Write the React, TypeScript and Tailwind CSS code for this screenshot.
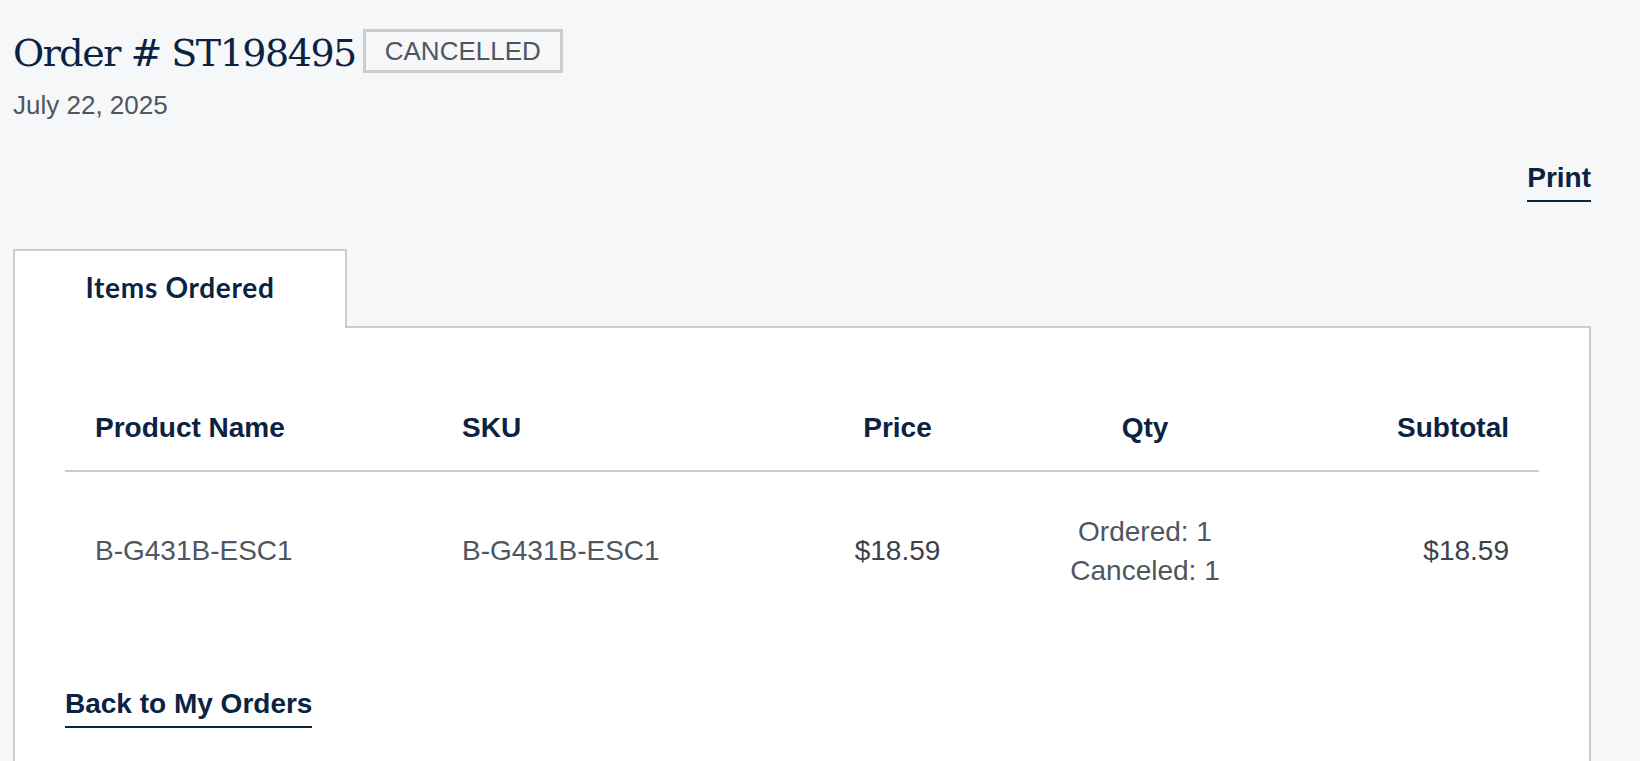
const navy = 'text-[#0b2343]'

const columns = [
  { label: 'Product Name', align: 'text-left pl-[30px]' },
  { label: 'SKU', align: 'text-left pl-[30px]' },
  { label: 'Price', align: 'text-center' },
  { label: 'Qty', align: 'text-center' },
  { label: 'Subtotal', align: 'text-right pr-[30px]' },
]

export default function App() {
  return (
    <main className="min-h-screen bg-[#f6f7f9] pl-[13px] pr-[49px] font-['Liberation_Sans',Arial,sans-serif]">
      {/* Header */}
      <div className="flex items-start pt-[29px]">
        <h1
          className={`font-['DejaVu_Serif',serif] text-[38px] leading-[44px] tracking-[-1.5px] mt-[2px] ${navy}`}
        >
          Order # ST198495
        </h1>
        <span className="ml-[7px] border-[3px] border-[#cccccc] px-[19px] py-[4px] text-[26px] leading-[30px] text-[#4f5660]">
          CANCELLED
        </span>
      </div>
      <p className="mt-[15px] text-[26px] leading-[30px] text-[#4f5660]">July 22, 2025</p>

      {/* Print */}
      <div className="flex justify-end mt-[42px]">
        <a href="#" className={`border-b-2 border-[#0b2343] pb-[6px] text-[28px] leading-[32px] font-bold ${navy}`}>
          Print
        </a>
      </div>

      {/* Tab */}
      <div className="mt-[47px] flex">
        <div className="relative z-10 -mb-[2px] w-[334px] h-[79px] border-2 border-b-0 border-[#cccccc] bg-white pt-[19px] text-center">
          <span className={`font-['Lato',sans-serif] text-[28px] leading-[34px] font-bold tracking-[0.7px] ${navy}`}>
            Items Ordered
          </span>
        </div>
      </div>

      {/* Panel */}
      <div className="border-2 border-[#cccccc] bg-white px-[50px] pt-[56px] pb-[60px]">
        <div className="grid grid-cols-[367px_348px_235px_260px_1fr] border-b-2 border-[#cccccc]">
          {columns.map((c) => (
            <div key={c.label} className={`pt-[28px] pb-[26px] text-[28px] leading-[32px] font-bold ${navy} ${c.align}`}>
              {c.label}
            </div>
          ))}
        </div>

        <div className="grid grid-cols-[367px_348px_235px_260px_1fr] items-center pt-[40px] text-[28px] text-[#4f5660]">
          <div className="pl-[30px] leading-[32px]">B-G431B-ESC1</div>
          <div className="pl-[30px] leading-[32px]">B-G431B-ESC1</div>
          <div className="text-center leading-[32px] text-[#3d424a]">$18.59</div>
          <div className="text-center leading-[39px]">
            <p>Ordered: 1</p>
            <p>Canceled: 1</p>
          </div>
          <div className="pr-[30px] text-right leading-[32px] text-[#3d424a]">$18.59</div>
        </div>

        <div className="mt-[98px]">
          <a href="#" className={`inline-block border-b-2 border-[#0b2343] pb-[6px] text-[28px] leading-[32px] font-bold ${navy}`}>
            Back to My Orders
          </a>
        </div>
      </div>
    </main>
  )
}
